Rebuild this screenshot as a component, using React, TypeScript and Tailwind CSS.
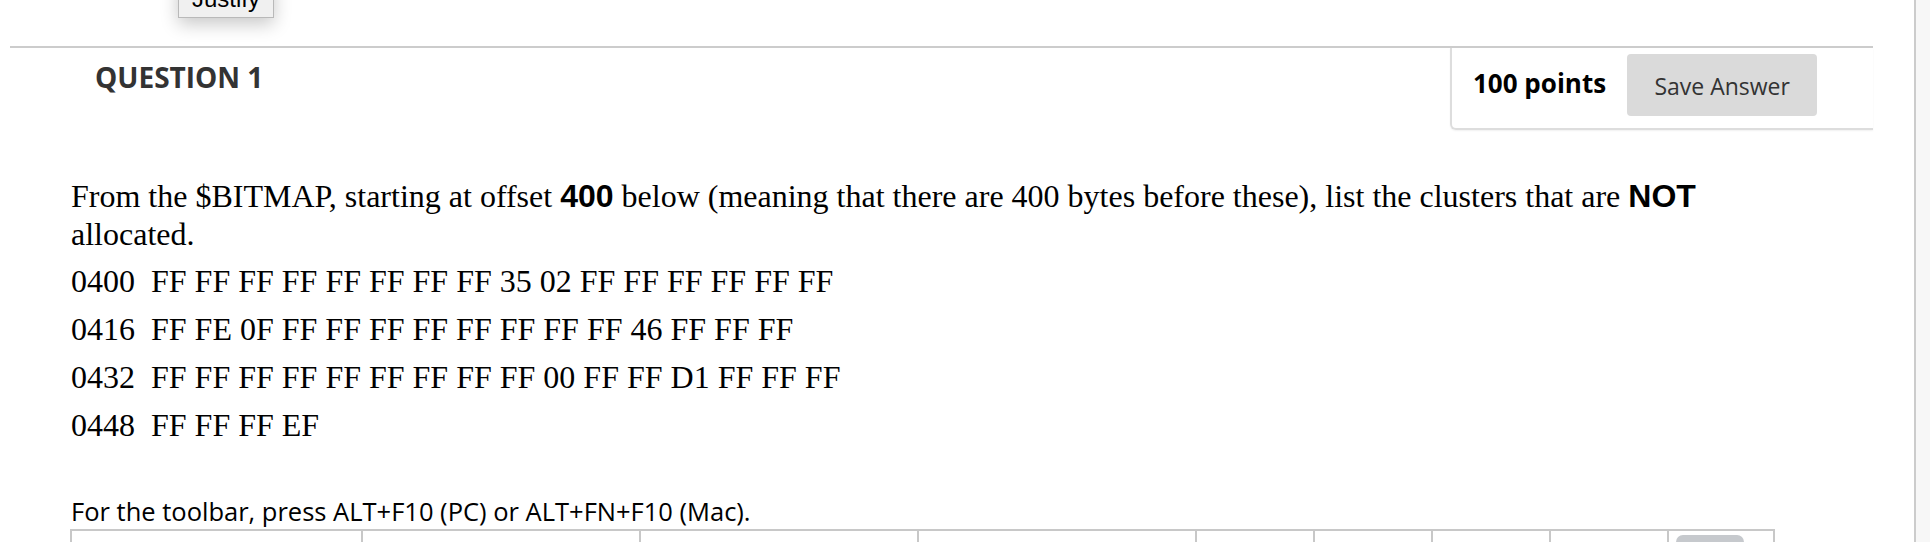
const hexRows = [
  { offset: "0400", bytes: "FF FF FF FF FF FF FF FF 35 02 FF FF FF FF FF FF" },
  { offset: "0416", bytes: "FF FE 0F FF FF FF FF FF FF FF FF 46 FF FF FF" },
  { offset: "0432", bytes: "FF FF FF FF FF FF FF FF FF 00 FF FF D1 FF FF FF" },
  { offset: "0448", bytes: "FF FF FF EF" },
];

const toolbarCells = [
  "w-[291px]",
  "w-[278px]",
  "w-[278px]",
  "w-[278px]",
  "w-[118px]",
  "w-[118px]",
  "w-[118px]",
  "w-[118px]",
];

function JustifyTip() {
  return (
    <div className="absolute left-[178px] top-[-22px] h-[40px] w-[96px] border border-[#b9b9b9] bg-[#f0f0f0] text-center shadow-[0_6px_18px_rgba(0,0,0,0.22)]">
      <span className="block pt-[8px] text-[24px] leading-[24px] text-black [font-family:'Liberation_Sans',Arial,sans-serif]">
        Justify
      </span>
    </div>
  );
}

function QuestionHeader() {
  return (
    <div className="ml-[10px] flex w-[1863px] justify-between border-t-2 border-[#cccccc]">
      <h2 className="pl-[85px] pt-[10px] text-[28px] font-bold leading-[38px] text-[#333333] [font-family:'Open_Sans',sans-serif]">
        QUESTION 1
      </h2>
      <div className="flex h-[82px] w-[423px] items-start rounded-bl-[6px] border-b-2 border-l-2 border-[#dddddd] pl-[21px] pt-[6px] shadow-[0_1px_2px_rgba(0,0,0,0.06)]">
        <span className="mt-[11px] text-[26px] font-bold leading-[36px] text-black [font-family:'Open_Sans',sans-serif]">
          100 points
        </span>
        <button className="ml-[21px] h-[62px] w-[190px] rounded-[4px] bg-[#dadada] pt-[2px] text-[23px] text-[#333333] [font-family:'Open_Sans',sans-serif]">
          Save Answer
        </button>
      </div>
    </div>
  );
}

function Toolbar() {
  return (
    <div className="ml-[70px] flex h-[40px] w-[1705px] border-x-2 border-t-2 border-[#c8c8c8]">
      {toolbarCells.map((w, i) => (
        <div key={i} className={`${w} h-full border-r-2 border-[#c8c8c8]`} />
      ))}
      <div className="w-[104px] pl-[7px] pt-[4px]">
        <div className="h-[30px] w-[68px] rounded-t-[7px] bg-[#c6c9cd]" />
      </div>
    </div>
  );
}

export default function App() {
  return (
    <div className="flex h-[542px] w-full overflow-hidden bg-white">
      <div className="relative w-[1914px] shrink-0 pt-[46px]">
        <JustifyTip />
        <QuestionHeader />

        <div className="pl-[71px] text-black">
          <p className="mt-[47px] w-[1700px] text-[32px] leading-[38px] [font-family:'Liberation_Serif','Times_New_Roman',serif]">
            From the $BITMAP, starting at offset{" "}
            <strong className="[font-family:'Liberation_Sans',Arial,sans-serif]">400</strong> below (meaning that
            there are 400 bytes before these), list the clusters that are{" "}
            <strong className="[font-family:'Liberation_Sans',Arial,sans-serif]">NOT</strong> allocated.
          </p>

          <div className="mt-[4px] text-[32px] leading-[48px] [font-family:'Liberation_Serif','Times_New_Roman',serif]">
            {hexRows.map((row) => (
              <div key={row.offset} className="whitespace-pre">
                {row.offset}
                {"\u00a0 "}
                {row.bytes}
              </div>
            ))}
          </div>

          <p className="mt-[45px] text-[25.5px] leading-[35px] text-black [font-family:'Open_Sans',sans-serif]">
            For the toolbar, press ALT+F10 (PC) or ALT+FN+F10 (Mac).
          </p>
        </div>

        <Toolbar />
      </div>
      <div className="flex-1 border-l-2 border-[#cccccc] bg-[#f7f7f7]" />
    </div>
  );
}
